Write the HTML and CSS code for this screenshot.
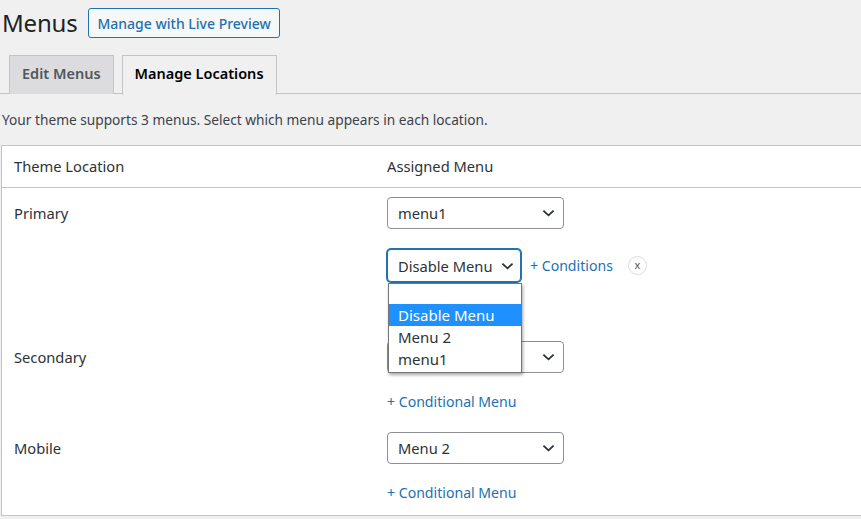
FILE: index.html
```html
<!DOCTYPE html>
<html lang="en">
<head>
<meta charset="utf-8">
<title>Menus</title>
<link rel="stylesheet" href="styles.css">
</head>
<body>
<div class="wrap">
  <div class="heading">
    <h1 class="title">Menus</h1>
    <a class="btn-outline" href="#">Manage with Live Preview</a>
  </div>
  <nav class="tabs">
    <a class="tab" href="#">Edit Menus</a>
    <a class="tab tab-active" href="#">Manage Locations</a>
  </nav>
  <p class="desc">Your theme supports 3 menus. Select which menu appears in each location.</p>
  <div class="table">
    <div class="row head">
      <div class="cell col1">Theme Location</div>
      <div class="cell col2">Assigned Menu</div>
    </div>
    <div class="row row-primary">
      <div class="cell col1 label">Primary</div>
      <div class="cell col2">
        <div class="select wide"><span>menu1</span><svg class="chev" viewBox="0 0 14 8"><path d="M1.5 1.5 L7 6.5 L12.5 1.5"/></svg></div>
        <div class="cond-line">
          <div class="select-wrap">
            <div class="select narrow focus"><span>Disable Menu</span><svg class="chev" viewBox="0 0 14 8"><path d="M1.5 1.5 L7 6.5 L12.5 1.5"/></svg></div>
            <ul class="listbox">
              <li class="opt empty">&nbsp;</li>
              <li class="opt sel">Disable Menu</li>
              <li class="opt">Menu 2</li>
              <li class="opt">menu1</li>
            </ul>
          </div>
          <a class="link cond-link" href="#">+ Conditions</a>
          <span class="close">x</span>
        </div>
      </div>
    </div>
    <div class="row row-secondary">
      <div class="cell col1 label">Secondary</div>
      <div class="cell col2">
        <div class="select wide under"><span>menu1</span><svg class="chev" viewBox="0 0 14 8"><path d="M1.5 1.5 L7 6.5 L12.5 1.5"/></svg></div>
        <a class="link add" href="#">+ Conditional Menu</a>
      </div>
    </div>
    <div class="row row-mobile">
      <div class="cell col1 label">Mobile</div>
      <div class="cell col2">
        <div class="select wide"><span>Menu 2</span><svg class="chev" viewBox="0 0 14 8"><path d="M1.5 1.5 L7 6.5 L12.5 1.5"/></svg></div>
        <a class="link add" href="#">+ Conditional Menu</a>
      </div>
    </div>
  </div>
</div>
</body>
</html>
```
FILE: styles.css
```css
* { box-sizing: border-box; }
html, body { margin: 0; padding: 0; }
body {
  background: #f0f0f1;
  font-family: "Noto Sans", "Open Sans", sans-serif;
  color: #3c434a;
  font-size: 14.7px;
  overflow: hidden;
}
.wrap { width: 900px; }
.heading {
  display: flex;
  align-items: center;
  padding: 8px 0 0 2px;
  height: 38px;
}
.title {
  margin: 0 11px 0 0;
  font-size: 24px;
  font-weight: 400;
  color: #1d2327;
  line-height: 30px;
  letter-spacing: -0.2px;
}
.btn-outline {
  display: inline-flex;
  align-items: center;
  height: 30px;
  padding: 0 8px;
  border: 1px solid #2271b1;
  border-radius: 3px;
  background: #f6f7f7;
  color: #2271b1;
  text-decoration: none;
  font-size: 14px;
  font-weight: 500;
}
.tabs {
  display: flex;
  gap: 8px;
  margin-top: 17px;
  padding-left: 9px;
  border-bottom: 1px solid #c3c4c7;
  height: 39px;
}
.tab {
  display: flex;
  align-items: center;
  height: 39px;
  padding: 0 12px 4px;
  border: 1px solid #c3c4c7;
  border-bottom: none;
  background: #dcdcde;
  color: #50575e;
  text-decoration: none;
  font-size: 14.5px;
  font-weight: 600;
}
.tab-active {
  background: #f0f0f1;
  color: #000;
  height: 40px;
  padding: 0 12px 5px;
  margin-bottom: -1px;
}
.desc {
  margin: 15px 0 0 2px;
  line-height: 22px;
  font-size: 13.7px;
  color: #3c434a;
}
.table {
  margin: 14px 0 0 1px;
  background: #fff;
  border: 1px solid #c3c4c7;
}
.row { display: flex; }
.head {
  height: 42px;
  padding-bottom: 2px;
  border-bottom: 1px solid #c3c4c7;
  align-items: center;
  color: #2c3338;
}
.cell { padding: 0 12px; }
.col1 { width: 373px; }
.col2 { flex: 1; }
.label { padding-top: 15px; color: #2c3338; font-weight: 400; line-height: 20px; }
.row-primary { height: 144px; }
.row-secondary { height: 91px; }
.row-mobile { height: 92px; }
.row-primary .col2, .row-secondary .col2, .row-mobile .col2 { padding-top: 9px; }
.select {
  display: flex;
  align-items: center;
  justify-content: space-between;
  height: 32px;
  border: 1px solid #8c8f94;
  border-radius: 4px;
  background: #fff;
  padding: 0 8px 0 10px;
  color: #2c3338;
  font-size: 14.7px;
}
.wide { width: 177px; }
.narrow { width: 134px; padding-right: 6px; }
.chev {
  width: 13px;
  height: 8px;
  fill: none;
  stroke: #2c3338;
  stroke-width: 2;
}
.focus {
  height: 33px;
  border-color: #2271b1;
  box-shadow: 0 0 0 1px #2271b1;
}
.cond-line {
  display: flex;
  align-items: center;
  margin-top: 20px;
}
.select-wrap { position: relative; }
.link {
  color: #2271b1;
  text-decoration: none;
  font-size: 14.1px;
}
.cond-link { margin-left: 9px; }
.close {
  display: inline-flex;
  align-items: center;
  justify-content: center;
  width: 19px;
  height: 19px;
  margin-left: 15px;
  border: 1px solid #dcdcde;
  border-radius: 50%;
  font-size: 11px;
  color: #50575e;
  line-height: 1;
  padding-bottom: 2px;
}
.add { display: block; margin-top: 18px; line-height: 22px; }
.listbox {
  position: absolute;
  left: 1px;
  top: 34px;
  width: 134px;
  margin: 0;
  padding: 1px 0 2px;
  list-style: none;
  background: #fff;
  border: 1px solid #767676;
  box-shadow: 1px 2px 3px rgba(0,0,0,0.35);
  z-index: 5;
}
.opt {
  height: 22px;
  line-height: 22px;
  padding-left: 9px;
  font-size: 15px;
  color: #2c3338;
  white-space: nowrap;
}
.empty { height: 19px; }
.sel { background: #1e90ff; color: #fff; }
```
